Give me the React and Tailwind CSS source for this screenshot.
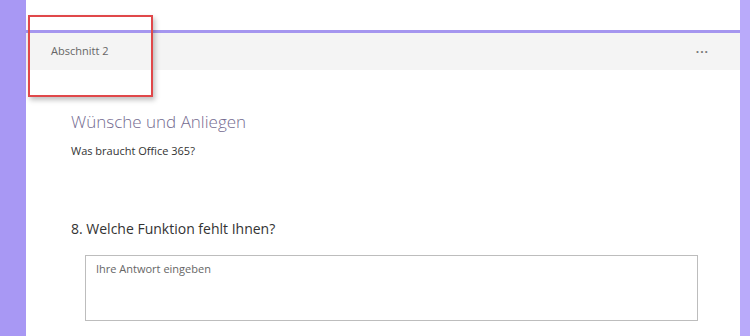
import React from 'react';

const App = () => {
  return (
    <div className="relative flex h-[336px] w-[750px] overflow-hidden bg-[#a999f5]" style={{ fontFamily: '"Open Sans", "Noto Sans", sans-serif' }}>
      <div className="w-[26px] shrink-0 bg-[#a898f4]"></div>

      <div className="flex w-[714px] shrink-0 flex-col bg-white">
        <div className="h-[30px]"></div>
        <div className="h-[3px] bg-[#a596ef]"></div>
        <div className="flex h-[37px] items-center justify-between bg-[#f4f4f4] pl-[25px] pr-[31px]">
          <span className="text-[11px] text-[#666]">Abschnitt 2</span>
          <span className="text-[12px] font-bold tracking-[1px] text-[#777]">···</span>
        </div>

        <div className="flex flex-col pl-[45px] pr-[40px]">
          <h2 className="mt-[41px] text-[17px] font-light leading-[22px] text-[#746b90]">Wünsche und Anliegen</h2>
          <p className="mt-[11px] text-[11px] leading-[14px] text-[#333]">Was braucht Office 365?</p>

          <p className="mt-[61px] text-[14px] leading-[20px] text-[#333]">8. Welche Funktion fehlt Ihnen?</p>

          <div className="ml-[14px] mt-[16px] h-[66px] w-[613px] border border-[#bdbdbd] px-[10px] pt-[5px] text-[11px] leading-[15px] text-[#666]">
            Ihre Antwort eingeben
          </div>
        </div>
      </div>

      <div className="flex-1 bg-[#b9aafa]"></div>

      <div className="absolute left-[28px] top-[15px] h-[82px] w-[125px] border-2 border-[#e0484a] shadow-[2px_3px_5px_rgba(0,0,0,0.25)]"></div>
    </div>
  );
};

export default App;
